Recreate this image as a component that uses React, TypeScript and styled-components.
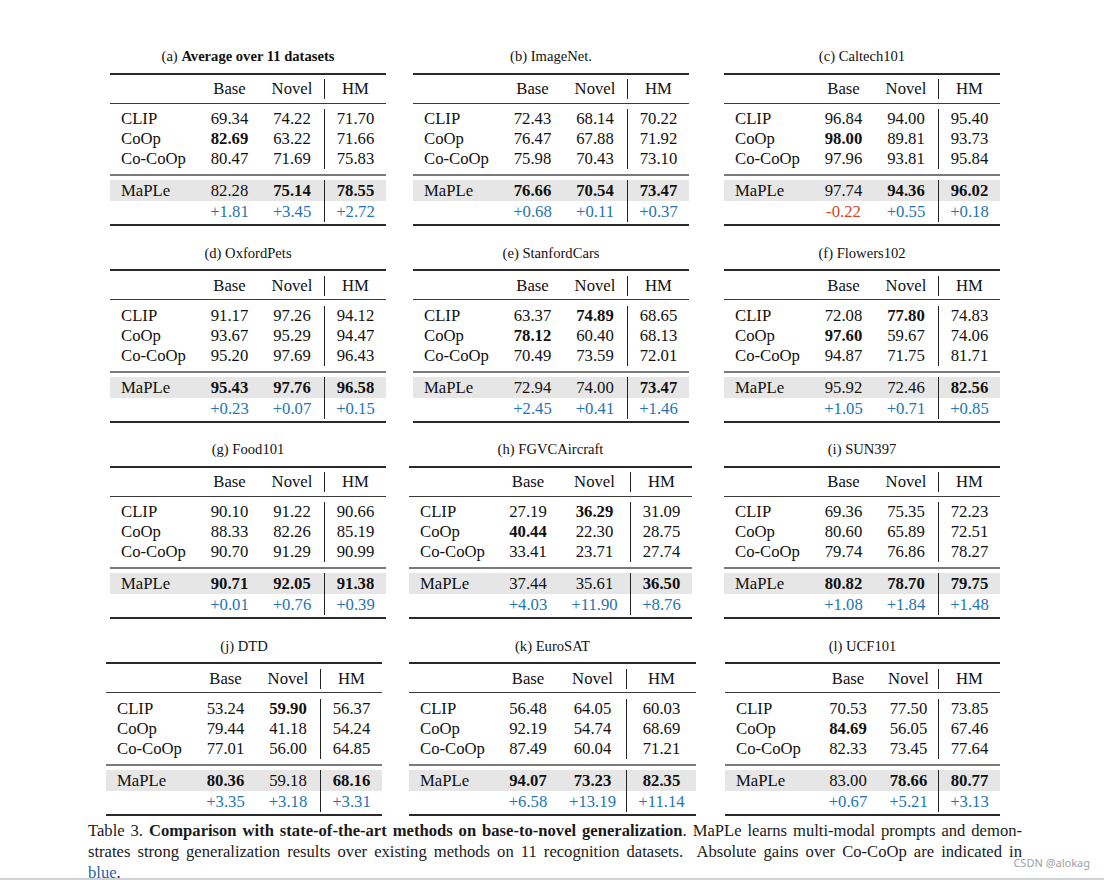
import React from 'react';
import styled, { createGlobalStyle } from 'styled-components';

const Global = createGlobalStyle`
  html, body { margin: 0; padding: 0; background: #ffffff; }
  body {
    width: 1104px;
    height: 880px;
    overflow: hidden;
    font-family: "Liberation Serif", "Times New Roman", serif;
    color: #111;
  }
`;

const Page = styled.div`
  position: relative;
  width: 1104px;
  height: 880px;
  box-sizing: border-box;
  padding-top: 46px;
  border-bottom: 2px solid #cfd3d6;
`;

const Grid = styled.div`
  display: grid;
  grid-template-columns: 302px 316px 300px;
  grid-auto-rows: 180px;
  row-gap: 16.67px;
  padding-left: 106px;
`;

const Block = styled.div<{ $shift: number; $width: number }>`
  margin-left: ${(p) => p.$shift}px;
  width: ${(p) => p.$width}px;
  display: flex;
  flex-direction: column;
`;

const Title = styled.div`
  height: 20px;
  line-height: 20px;
  font-size: 14.6px;
  text-align: center;
  white-space: nowrap;
  color: #111;
  b { font-weight: 700; }
`;

const Rule = styled.div<{ $h: number; $c: string; $mt?: number }>`
  height: ${(p) => p.$h}px;
  background: ${(p) => p.$c};
  margin-top: ${(p) => p.$mt ?? 0}px;
`;

const Section = styled.div<{ $pt: number; $pb: number }>`
  padding-top: ${(p) => p.$pt}px;
  padding-bottom: ${(p) => p.$pb}px;
`;

const Row = styled.div<{ $cols: string; $h: number; $band?: boolean }>`
  display: grid;
  grid-template-columns: ${(p) => p.$cols};
  height: ${(p) => p.$h}px;
  line-height: ${(p) => p.$h}px;
  font-size: 16.7px;
  background: ${(p) => (p.$band ? '#e6e6e6' : 'transparent')};
`;

const Label = styled.div`
  padding-left: 11px;
  text-align: left;
  white-space: nowrap;
  color: #111;
`;

const Cell = styled.div<{ $bold?: boolean; $tone?: 'blue' | 'red' | 'ink'; $sep?: boolean }>`
  text-align: center;
  white-space: nowrap;
  font-weight: ${(p) => (p.$bold ? 700 : 400)};
  color: ${(p) => (p.$tone === 'blue' ? '#2474b5' : p.$tone === 'red' ? '#d0452b' : '#111')};
  border-left: ${(p) => (p.$sep ? '1px solid #222' : '0')};
`;

const Caption = styled.div`
  margin-top: 4.5px;
  margin-left: 88px;
  width: 934px;
  font-size: 16.6px;
  color: #1a1a1a;
`;

const CapLine = styled.div<{ $last?: boolean }>`
  height: ${(p) => (p.$last ? 15 : 21)}px;
  line-height: ${(p) => (p.$last ? 15 : 21)}px;
  margin-top: ${(p) => (p.$last ? 3 : 0)}px;
  text-align: ${(p) => (p.$last ? 'left' : 'justify')};
  text-align-last: ${(p) => (p.$last ? 'left' : 'justify')};
  white-space: ${(p) => (p.$last ? 'nowrap' : 'normal')};
  b { font-weight: 700; }
`;

const BlueWord = styled.span`
  color: #1f5fb0;
`;

const Watermark = styled.div`
  position: absolute;
  right: 14px;
  top: 856px;
  font-family: "Noto Sans", "DejaVu Sans", sans-serif;
  font-size: 11px;
  line-height: 14px;
  color: #a0a0a0;
`;

type TableSpec = {
  title: React.ReactNode;
  shift: number;
  cols: number[];
  body: string[][];
  maple: string[];
  delta: string[];
};

const STD = [89, 61, 64, 62];

const tables: TableSpec[] = [
  {
    title: <>(a) <b>Average over 11 datasets</b></>,
    shift: 4,
    cols: STD,
    body: [
      ['CLIP', '69.34', '74.22', '71.70'],
      ['CoOp', '*82.69', '63.22', '71.66'],
      ['Co-CoOp', '80.47', '71.69', '75.83'],
    ],
    maple: ['82.28', '*75.14', '*78.55'],
    delta: ['+1.81', '+3.45', '+2.72'],
  },
  {
    title: '(b) ImageNet.',
    shift: 5,
    cols: STD,
    body: [
      ['CLIP', '72.43', '68.14', '70.22'],
      ['CoOp', '76.47', '67.88', '71.92'],
      ['Co-CoOp', '75.98', '70.43', '73.10'],
    ],
    maple: ['*76.66', '*70.54', '*73.47'],
    delta: ['+0.68', '+0.11', '+0.37'],
  },
  {
    title: '(c) Caltech101',
    shift: 0,
    cols: STD,
    body: [
      ['CLIP', '96.84', '94.00', '95.40'],
      ['CoOp', '*98.00', '89.81', '93.73'],
      ['Co-CoOp', '97.96', '93.81', '95.84'],
    ],
    maple: ['97.74', '*94.36', '*96.02'],
    delta: ['-0.22', '+0.55', '+0.18'],
  },
  {
    title: '(d) OxfordPets',
    shift: 4,
    cols: STD,
    body: [
      ['CLIP', '91.17', '97.26', '94.12'],
      ['CoOp', '93.67', '95.29', '94.47'],
      ['Co-CoOp', '95.20', '97.69', '96.43'],
    ],
    maple: ['*95.43', '*97.76', '*96.58'],
    delta: ['+0.23', '+0.07', '+0.15'],
  },
  {
    title: '(e) StanfordCars',
    shift: 5,
    cols: STD,
    body: [
      ['CLIP', '63.37', '*74.89', '68.65'],
      ['CoOp', '*78.12', '60.40', '68.13'],
      ['Co-CoOp', '70.49', '73.59', '72.01'],
    ],
    maple: ['72.94', '74.00', '*73.47'],
    delta: ['+2.45', '+0.41', '+1.46'],
  },
  {
    title: '(f) Flowers102',
    shift: 0,
    cols: STD,
    body: [
      ['CLIP', '72.08', '*77.80', '74.83'],
      ['CoOp', '*97.60', '59.67', '74.06'],
      ['Co-CoOp', '94.87', '71.75', '81.71'],
    ],
    maple: ['95.92', '72.46', '*82.56'],
    delta: ['+1.05', '+0.71', '+0.85'],
  },
  {
    title: '(g) Food101',
    shift: 4,
    cols: STD,
    body: [
      ['CLIP', '90.10', '91.22', '90.66'],
      ['CoOp', '88.33', '82.26', '85.19'],
      ['Co-CoOp', '90.70', '91.29', '90.99'],
    ],
    maple: ['*90.71', '*92.05', '*91.38'],
    delta: ['+0.01', '+0.76', '+0.39'],
  },
  {
    title: '(h) FGVCAircraft',
    shift: 1,
    cols: [88, 62, 71, 62],
    body: [
      ['CLIP', '27.19', '*36.29', '31.09'],
      ['CoOp', '*40.44', '22.30', '28.75'],
      ['Co-CoOp', '33.41', '23.71', '27.74'],
    ],
    maple: ['37.44', '35.61', '*36.50'],
    delta: ['+4.03', '+11.90', '+8.76'],
  },
  {
    title: '(i) SUN397',
    shift: 0,
    cols: STD,
    body: [
      ['CLIP', '69.36', '75.35', '72.23'],
      ['CoOp', '80.60', '65.89', '72.51'],
      ['Co-CoOp', '79.74', '76.86', '78.27'],
    ],
    maple: ['*80.82', '*78.70', '*79.75'],
    delta: ['+1.08', '+1.84', '+1.48'],
  },
  {
    title: '(j) DTD',
    shift: 0,
    cols: STD,
    body: [
      ['CLIP', '53.24', '*59.90', '56.37'],
      ['CoOp', '79.44', '41.18', '54.24'],
      ['Co-CoOp', '77.01', '56.00', '64.85'],
    ],
    maple: ['*80.36', '59.18', '*68.16'],
    delta: ['+3.35', '+3.18', '+3.31'],
  },
  {
    title: '(k) EuroSAT',
    shift: 1,
    cols: [88, 62, 67, 70],
    body: [
      ['CLIP', '56.48', '64.05', '60.03'],
      ['CoOp', '92.19', '54.74', '68.69'],
      ['Co-CoOp', '87.49', '60.04', '71.21'],
    ],
    maple: ['*94.07', '*73.23', '*82.35'],
    delta: ['+6.58', '+13.19', '+11.14'],
  },
  {
    title: '(l) UCF101',
    shift: 1,
    cols: [92, 62, 59, 62],
    body: [
      ['CLIP', '70.53', '77.50', '73.85'],
      ['CoOp', '*84.69', '56.05', '67.46'],
      ['Co-CoOp', '82.33', '73.45', '77.64'],
    ],
    maple: ['83.00', '*78.66', '*80.77'],
    delta: ['+0.67', '+5.21', '+3.13'],
  },
];

const Value: React.FC<{ v: string; sep?: boolean; tone?: 'blue' | 'red' | 'ink' }> = ({ v, sep, tone }) => {
  const bold = v.startsWith('*');
  return (
    <Cell $bold={bold} $sep={sep} $tone={tone}>
      {bold ? v.slice(1) : v}
    </Cell>
  );
};

const ResultTable: React.FC<{ t: TableSpec }> = ({ t }) => {
  const cols = t.cols.map((c) => `${c}px`).join(' ');
  const width = t.cols.reduce((a, b) => a + b, 0);
  return (
    <Block $shift={t.shift} $width={width}>
      <Title>{t.title}</Title>
      <Rule $h={2} $c="#2a2a2a" $mt={6.5} />
      <Section $pt={4.5} $pb={3.5}>
        <Row $cols={cols} $h={20}>
          <Label />
          <Cell>Base</Cell>
          <Cell>Novel</Cell>
          <Cell $sep>HM</Cell>
        </Row>
      </Section>
      <Rule $h={1} $c="#3a3a3a" />
      <Section $pt={5.5} $pb={5}>
        {t.body.map((r) => (
          <Row key={r[0]} $cols={cols} $h={20}>
            <Label>{r[0]}</Label>
            <Value v={r[1]} />
            <Value v={r[2]} />
            <Value v={r[3]} sep />
          </Row>
        ))}
      </Section>
      <Rule $h={2} $c="#7a7a7a" />
      <Section $pt={4} $pb={2}>
        <Row $cols={cols} $h={21} $band>
          <Label>MaPLe</Label>
          <Value v={t.maple[0]} />
          <Value v={t.maple[1]} />
          <Value v={t.maple[2]} sep />
        </Row>
        <Row $cols={cols} $h={21}>
          <Label />
          {t.delta.map((d, i) => (
            <Value key={i} v={d} sep={i === 2} tone={d.startsWith('-') ? 'red' : 'blue'} />
          ))}
        </Row>
      </Section>
      <Rule $h={2} $c="#2a2a2a" />
    </Block>
  );
};

export default function App() {
  return (
    <Page>
      <Global />
      <Grid>
        {tables.map((t, i) => (
          <ResultTable key={i} t={t} />
        ))}
      </Grid>
      <Caption>
        <CapLine>
          Table 3. <b>Comparison with state-of-the-art methods on base-to-novel generalization</b>. MaPLe learns
          multi-modal prompts and demon-
        </CapLine>
        <CapLine>
          strates strong generalization results over existing methods on 11 recognition datasets.&nbsp; Absolute gains
          over Co-CoOp are indicated in
        </CapLine>
        <CapLine $last>
          <BlueWord>blue</BlueWord>.
        </CapLine>
      </Caption>
      <Watermark>CSDN @alokag</Watermark>
    </Page>
  );
}
